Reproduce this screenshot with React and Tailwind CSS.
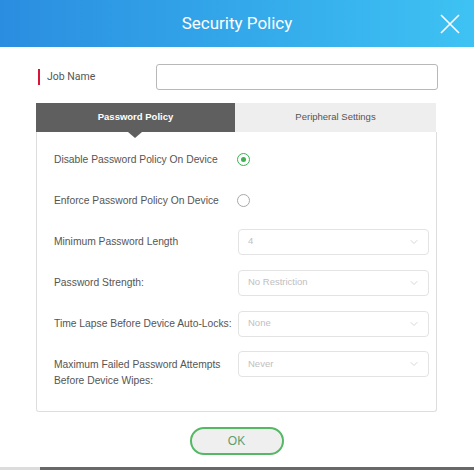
import React from 'react';
import { ChevronDown } from 'lucide-react';

const SelectBox = ({ value }) => (
  <div className="flex h-[26px] w-[191px] items-center justify-between rounded-sm border border-[#e3e3e3] bg-white pl-[9px] pr-[8px] text-[9.5px] text-[#c0c0c0]">
    <span>{value}</span>
    <ChevronDown size={12} strokeWidth={1.5} className="text-[#c8c8c8]" />
  </div>
);

const Radio = ({ checked }) => (
  <div
    className={`flex h-[13px] w-[13px] items-center justify-center rounded-full border-[1.5px] ${
      checked ? 'border-[#3fae55]' : 'border-[#a8a8a8]'
    }`}
  >
    {checked && <div className="h-[5px] w-[5px] rounded-full bg-[#3fae55]"></div>}
  </div>
);

const App = () => {
  return (
    <div className="flex h-[470px] w-[474px] flex-col bg-white font-['Liberation_Sans',Arial,sans-serif]">
      {/* Header */}
      <div className="relative flex h-[47px] items-center justify-center bg-gradient-to-r from-[#2b8de0] to-[#3ec2f3]">
        <h1 className="font-['Roboto',sans-serif] text-[17px] text-white">Security Policy</h1>
        <svg className="absolute left-[440px] top-[14px]" width="20" height="20" viewBox="0 0 20 20">
          <path d="M1 1 L19 19 M19 1 L1 19" stroke="white" strokeWidth="1.6" fill="none" />
        </svg>
      </div>

      {/* Job name */}
      <div className="mt-[17px] flex h-[26px] items-center pl-[38px]">
        <div className="h-[16px] w-[2px] bg-[#d9143a]"></div>
        <span className="ml-[7px] w-[109px] font-['Roboto',sans-serif] text-[10.5px] text-[#555]">Job Name</span>
        <div className="h-[26px] w-[282px] rounded-[3px] border border-[#b8b8b8] bg-white"></div>
      </div>

      {/* Tabs */}
      <div className="ml-[36px] mt-[13px] flex h-[29px] w-[400px]">
        <div className="relative flex w-[199px] items-center justify-center bg-[#5f5f5f] text-[9.5px] font-bold text-white">
          Password Policy
          <div className="absolute left-[92px] top-[29px] h-0 w-0 border-l-[7px] border-r-[7px] border-t-[6px] border-l-transparent border-r-transparent border-t-[#5f5f5f]"></div>
        </div>
        <div className="flex flex-1 items-center justify-center bg-[#eeeeee] text-[9.5px] text-[#555]">
          Peripheral Settings
        </div>
      </div>

      {/* Panel */}
      <div className="ml-[36px] flex h-[280px] w-[401px] flex-col rounded-b-[3px] border border-t-0 border-[#dedede] pl-[17px] pt-[7px] text-[10.3px] text-[#555]">
        <div className="flex h-[41px] items-center">
          <span className="w-[184px] whitespace-nowrap">Disable Password Policy On Device</span>
          <div className="-ml-[1px]"><Radio checked /></div>
        </div>
        <div className="flex h-[41px] items-center">
          <span className="w-[184px] whitespace-nowrap">Enforce Password Policy On Device</span>
          <div className="-ml-[1px]"><Radio /></div>
        </div>
        <div className="flex h-[41px] items-center">
          <span className="w-[184px] whitespace-nowrap">Minimum Password Length</span>
          <SelectBox value="4" />
        </div>
        <div className="flex h-[41px] items-center">
          <span className="w-[184px] whitespace-nowrap">Password Strength:</span>
          <SelectBox value="No Restriction" />
        </div>
        <div className="flex h-[41px] items-center">
          <span className="w-[184px] whitespace-nowrap">Time Lapse Before Device Auto-Locks:</span>
          <SelectBox value="None" />
        </div>
        <div className="flex items-start pt-[7px]">
          <span className="mt-[6px] w-[184px] whitespace-nowrap leading-[16px]">
            Maximum Failed Password Attempts
            <br />
            Before Device Wipes:
          </span>
          <SelectBox value="Never" />
        </div>
      </div>

      {/* OK button */}
      <div className="mt-[15px] flex justify-center pr-[1px]">
        <button className="flex h-[28px] w-[94px] items-center justify-center rounded-full border-2 border-[#55b865] bg-[#efefef] text-[12px] text-[#5f9e6a]">
          OK
        </button>
      </div>

      {/* bottom edge */}
      <div className="mt-auto flex h-[3px]">
        <div className="w-[40px] bg-[#dcdcdc]"></div>
        <div className="flex-1 bg-[#686868]"></div>
      </div>
    </div>
  );
};

export default App;
